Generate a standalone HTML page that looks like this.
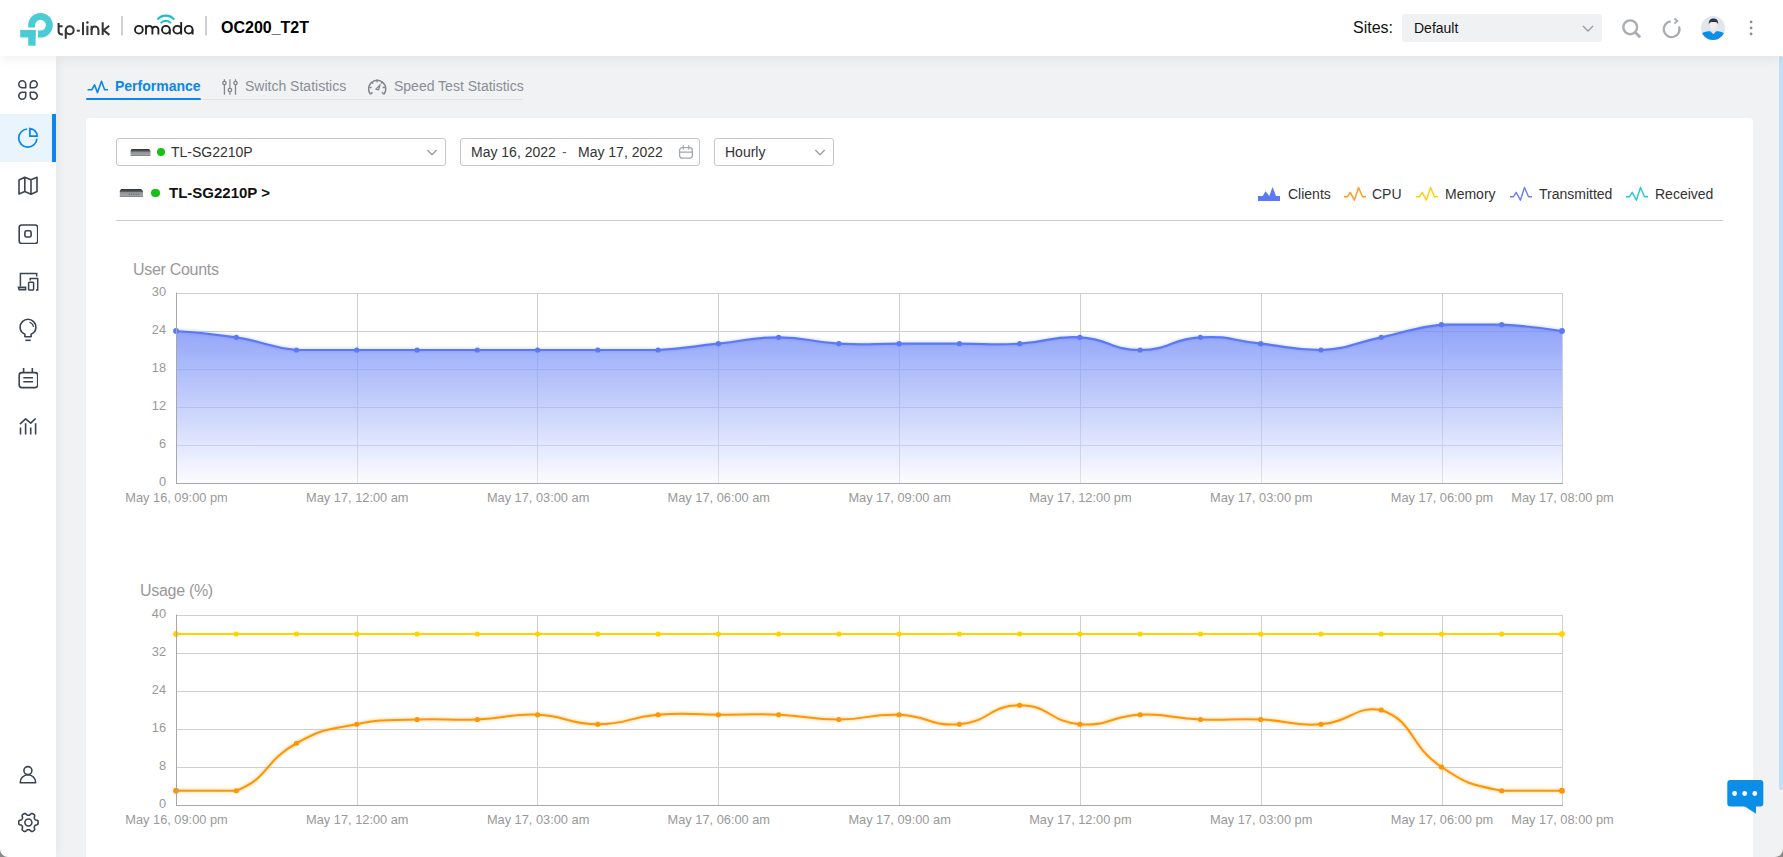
<!DOCTYPE html>
<html><head><meta charset="utf-8"><style>
*{box-sizing:border-box}
html,body{margin:0;padding:0}
body{width:1783px;height:857px;overflow:hidden;background:#f1f2f4;font-family:"Liberation Sans", sans-serif;position:relative;color:#333}
.abs{position:absolute}
.si{position:absolute}
#hdr{position:absolute;left:0;top:0;width:1783px;height:56px;background:#fff;box-shadow:0 2px 12px rgba(0,0,0,0.07);z-index:5}
#side{position:absolute;left:0;top:56px;width:56px;height:801px;background:#fff;z-index:3;box-shadow:2px 0 10px rgba(0,0,0,0.05)}
#card{position:absolute;left:86px;top:118px;width:1667px;height:760px;background:#fff;border-radius:4px}
.ax{font-family:"Liberation Sans", sans-serif;font-size:12.8px;fill:#999}
.ttl{font-family:"Liberation Sans", sans-serif;font-size:16px;fill:#999;letter-spacing:-0.3px}
.txt{position:absolute;white-space:nowrap;line-height:1}
.box{position:absolute;border:1px solid #c3c7cc;border-radius:3px;background:#fff}
</style></head><body>
<div id="hdr">
<svg class="abs" style="left:0;top:0" width="320" height="56" viewBox="0 0 320 56">
<rect x="20.2" y="30" width="15.4" height="7.4" fill="#4acbd6"/>
<rect x="28.2" y="30" width="7.4" height="15.7" fill="#4acbd6"/>
<path d="M31.65 27.4 V25.2 A8.85 8.85 0 1 1 40.5 34.05 H38" fill="none" stroke="#4acbd6" stroke-width="6.9"/>
<rect x="121" y="16" width="2" height="19.5" fill="#cdd1d5"/>
<rect x="205" y="16" width="2" height="19.5" fill="#cdd1d5"/>
<path d="M157.4 19.6 A10.85 10.85 0 0 1 174.2 19.6" fill="none" stroke="#1cbdcc" stroke-width="2.1"/>
<path d="M160.7 23.1 A6.8 6.8 0 0 1 170.9 23.1" fill="none" stroke="#1cbdcc" stroke-width="2.1"/>
</svg>
<svg class="abs" style="left:0;top:0" width="200" height="56" viewBox="0 0 200 56" fill="none" stroke="#363636" stroke-width="2.05">
<path d="M58.6 22.9 V31.6 C58.6 33.6 59.8 34.6 62.9 34.6 M58.6 26.3 H62.6"/>
<circle cx="69.7" cy="30.25" r="3.95"/><path d="M65.75 30.2 V38.8"/>
<path d="M76.8 30.7 H79.8" stroke-width="2"/>
<path d="M83 22.2 V35.1"/>
<path d="M87.4 25.8 V35.1"/><circle cx="87.4" cy="22.4" r="1.25" fill="#333" stroke="none"/>
<path d="M91.6 35.1 V29.9 A3.4 3.4 0 0 1 98.4 29.9 V35.1"/><path d="M91.6 25.8 V30"/>
<path d="M102.7 22.2 V35.1 M109.2 25.7 L103.6 30.2 L109.4 34.9"/>
</svg>
<svg class="abs" style="left:0;top:0" width="200" height="56" viewBox="0 0 200 56" fill="none" stroke="#1f1f1f" stroke-width="1.85">
<circle cx="138.9" cy="29.7" r="3.9"/>
<path d="M146 34.5 V25.3 M146 29 A3.2 3.2 0 0 1 152.4 29 V34.5 M152.4 29 A3.1 3.1 0 0 1 158.4 29 V34.5"/>
<circle cx="165.9" cy="29.7" r="3.9"/><path d="M169.8 29.7 V34.5"/>
<circle cx="177.3" cy="29.7" r="3.9"/><path d="M181.2 22 V34.5"/>
<circle cx="188.7" cy="29.7" r="3.9"/><path d="M192.6 29.7 V34.5"/>
</svg>
<div class="txt" style="left:221px;top:20px;font-size:16px;font-weight:bold;color:#000">OC200_T2T</div>
<div class="txt" style="left:1353px;top:20px;font-size:16px;color:#111">Sites:</div>
<div class="abs" style="left:1402px;top:14px;width:200px;height:28px;background:#f0f1f3;border-radius:3px"></div>
<div class="txt" style="left:1414px;top:21px;font-size:14px;color:#111">Default</div>
<svg class="abs" style="left:1580px;top:22px" width="16" height="12" viewBox="0 0 16 12"><path d="M3 4 L8 9 L13 4" fill="none" stroke="#999ea4" stroke-width="1.4"/></svg>
<svg class="abs" style="left:1618px;top:15px" width="26" height="26" viewBox="0 0 26 26" fill="none" stroke="#a9adb2">
<circle cx="12.2" cy="12.3" r="6.9" stroke-width="2.4"/><path d="M17.4 17.4 L22.2 22.2" stroke-width="2.8"/></svg>
<svg class="abs" style="left:1658px;top:15px" width="26" height="26" viewBox="0 0 26 26" fill="none" stroke="#a9adb2" stroke-width="2.3">
<path d="M12.8 6.3 A7.9 7.9 0 1 0 21 11.3"/><path d="M16.3 3.4 L19.4 6 L16.5 8.6" stroke-width="1.9"/></svg>
<svg class="abs" style="left:1701px;top:16px" width="24" height="24" viewBox="0 0 24 24">
<defs><clipPath id="av"><circle cx="12" cy="12" r="12"/></clipPath></defs>
<circle cx="12" cy="12" r="12" fill="#e1e6eb"/>
<g clip-path="url(#av)"><path d="M0 17.8 C3 15.6 6.5 15.3 9.3 15.3 L12.3 18 L15.3 15.3 C18 15.3 21 15.6 24 17.8 V24 H0 Z" fill="#0a8ee8"/>
<path d="M10.6 11.5 H14.1 V16 L12.3 17.8 L10.6 16 Z" fill="#ebe4e4"/>
<path d="M9.1 7 C9.1 11.5 9.8 13.6 12.35 13.6 C14.9 13.6 15.6 11.5 15.6 7 Z" fill="#f4efef"/>
<path d="M7.9 8.4 C7.4 4.5 9.2 2.4 12.5 2.4 C15.8 2.4 17.6 4.5 17.1 8.4 C16.5 6.4 15.6 5.9 12.5 6 C9.4 5.9 8.5 6.4 7.9 8.4 Z" fill="#2b3844"/></g></svg>
<svg class="abs" style="left:1746px;top:18px" width="10" height="20" viewBox="0 0 10 20" fill="#8c9096"><circle cx="5.1" cy="3.9" r="1.4"/><circle cx="5.1" cy="9.9" r="1.4"/><circle cx="5.1" cy="16" r="1.4"/></svg>
</div>
<div id="side">
<div class="abs" style="left:0;top:58px;width:52px;height:48px;background:#eaf4fd"></div>
<div class="abs" style="left:52px;top:58px;width:4px;height:48px;background:#0a87eb"></div>
</div>
<div style="position:absolute;left:0;top:0;z-index:6">
<svg class="si" style="left:18px;top:80px" width="20" height="20" viewBox="0 0 20 20" fill="none" stroke="#3b4351" stroke-width="1.6" stroke-linejoin="round">
<path d="M7.7 7.7 H4.25 A3.45 3.45 0 1 1 7.7 4.25 Z"/><path d="M12.3 7.7 V4.25 A3.45 3.45 0 1 1 15.75 7.7 Z"/>
<path d="M7.7 12.3 V15.75 A3.45 3.45 0 1 1 4.25 12.3 Z"/><path d="M12.3 12.3 H15.75 A3.45 3.45 0 1 1 12.3 15.75 Z"/></svg>
<svg class="si" style="left:16px;top:126px" width="24" height="24" viewBox="0 0 24 24" fill="none" stroke="#0a87eb" stroke-width="1.7">
<path d="M11.2 3 A9.1 9.1 0 1 0 20.9 12.6"/><path d="M13.9 2.5 V10.1 H21.2 A8 8 0 0 0 13.9 2.5 Z" stroke-linejoin="miter"/></svg>
<svg class="si" style="left:18px;top:176px" width="20" height="20" viewBox="0 0 20 20" fill="none" stroke="#3b4351" stroke-width="1.6" stroke-linejoin="round">
<path d="M1 4 L6.8 1.2 L13 3.8 L19 1.3 V15.6 L13 18.2 L6.8 15.5 L1 18 Z M6.8 1.2 V15.5 M13 3.8 V18.2"/></svg>
<svg class="si" style="left:18px;top:224px" width="20" height="20" viewBox="0 0 20 20" fill="none" stroke="#3b4351" stroke-width="1.6">
<rect x="1.2" y="1" width="18.5" height="18.5" rx="2.6"/><rect x="6.9" y="6.8" width="6.2" height="6.2" rx="1.6"/></svg>
<svg class="si" style="left:16px;top:270px" width="24" height="24" viewBox="0 0 24 24" fill="none" stroke="#3b4351" stroke-width="1.5">
<path d="M4.4 16.5 V3.6 H20.7 V6.5"/><path d="M2.4 17.3 H9.6 V19.8 H3.2 Z" fill="#b4b8bf"/><path d="M14.2 10.4 V8.5 H21.7 V20 H20"/><rect x="12.6" y="12.2" width="5" height="7.9" rx="0.8"/></svg>
<svg class="si" style="left:16px;top:316px" width="24" height="26" viewBox="0 0 24 26" fill="none" stroke="#3b4351" stroke-width="1.6">
<path d="M8.9 18.2 V20.8 H15.1 V18.2 C18.2 16.8 19.9 14.2 19.9 11.2 A7.9 7.9 0 1 0 4.1 11.2 C4.1 14.2 5.8 16.8 8.9 18.2 Z" stroke-linejoin="round"/><path d="M9.4 24.3 H14.7"/><path d="M13.4 6.3 A6.2 6.2 0 0 1 17.6 10.8" stroke-width="1.2"/></svg>
<svg class="si" style="left:18px;top:366px" width="20" height="24" viewBox="0 0 20 24" fill="none" stroke="#3b4351" stroke-width="1.6">
<rect x="1.2" y="6.6" width="18.5" height="15" rx="2.6"/><path d="M5.6 2 V6.6 M14.3 2 V6.6 M5.3 11.7 H15 M5.3 15.8 H15"/></svg>
<svg class="si" style="left:18px;top:416px" width="20" height="20" viewBox="0 0 20 20" fill="none" stroke="#3b4351" stroke-width="1.6">
<path d="M1.9 8.1 L7.6 2.9 L12.7 7.1 L17.6 2.5" stroke-linejoin="round"/><path d="M2.5 11.4 V18.5 M7.6 7.3 V18.5 M12.7 11.4 V18.5 M17.6 7.3 V18.5"/></svg>
<svg class="si" style="left:18px;top:765px" width="20" height="20" viewBox="0 0 20 20" fill="none" stroke="#3b4351" stroke-width="1.6">
<circle cx="9.9" cy="5.6" r="4"/><path d="M2.2 17.7 A7.75 8 0 0 1 17.7 17.7 Z" stroke-linejoin="round"/></svg>
<svg class="si" style="left:17.5px;top:812px" width="21" height="21" viewBox="0 0 21 21" fill="none" stroke="#3b4351" stroke-width="1.6" stroke-linejoin="round">
<path d="M20.16 10.50 L20.14 11.01 L20.08 11.52 L19.94 12.01 L19.61 12.46 L18.88 12.77 L17.96 12.96 L17.39 13.18 L17.09 13.48 L16.88 13.80 L16.69 14.13 L16.50 14.46 L16.33 14.81 L16.22 15.21 L16.31 15.82 L16.61 16.71 L16.70 17.50 L16.48 18.01 L16.12 18.38 L15.71 18.68 L15.28 18.95 L14.83 19.19 L14.36 19.39 L13.86 19.52 L13.31 19.46 L12.67 18.98 L12.05 18.28 L11.57 17.89 L11.17 17.79 L10.78 17.77 L10.40 17.77 L10.02 17.77 L9.63 17.79 L9.23 17.89 L8.75 18.28 L8.13 18.98 L7.49 19.46 L6.94 19.52 L6.44 19.39 L5.97 19.19 L5.52 18.95 L5.09 18.68 L4.68 18.38 L4.32 18.01 L4.10 17.50 L4.19 16.71 L4.49 15.82 L4.58 15.21 L4.47 14.81 L4.30 14.46 L4.11 14.13 L3.92 13.80 L3.71 13.48 L3.41 13.18 L2.84 12.96 L1.92 12.77 L1.19 12.46 L0.86 12.01 L0.72 11.52 L0.66 11.01 L0.64 10.50 L0.66 9.99 L0.72 9.48 L0.86 8.99 L1.19 8.54 L1.92 8.23 L2.84 8.04 L3.41 7.82 L3.71 7.52 L3.92 7.20 L4.11 6.87 L4.30 6.54 L4.47 6.19 L4.58 5.79 L4.49 5.18 L4.19 4.29 L4.10 3.50 L4.32 2.99 L4.68 2.62 L5.09 2.32 L5.52 2.05 L5.97 1.81 L6.44 1.61 L6.94 1.48 L7.49 1.54 L8.13 2.02 L8.75 2.72 L9.23 3.11 L9.63 3.21 L10.02 3.23 L10.40 3.23 L10.78 3.23 L11.17 3.21 L11.57 3.11 L12.05 2.72 L12.67 2.02 L13.31 1.54 L13.86 1.48 L14.36 1.61 L14.83 1.81 L15.28 2.05 L15.71 2.32 L16.12 2.62 L16.48 2.99 L16.70 3.50 L16.61 4.29 L16.31 5.18 L16.22 5.79 L16.33 6.19 L16.50 6.54 L16.69 6.87 L16.88 7.20 L17.09 7.52 L17.39 7.82 L17.96 8.04 L18.88 8.23 L19.61 8.54 L19.94 8.99 L20.08 9.48 L20.14 9.99 L20.16 10.50Z"/><circle cx="10.4" cy="10.5" r="3.5"/></svg></div>

<!-- tabs -->
<svg class="abs" style="left:84px;top:74px" width="30" height="24" viewBox="0 0 30 24" fill="none" stroke="#0a87eb" stroke-width="1.6" stroke-linejoin="round">
<path d="M3.6 15.7 H8 L10.5 10.8 L13.5 18.6 L17.5 7.2 L20.6 15.7 H24"/></svg>
<div class="txt" style="left:115px;top:79px;font-size:14px;font-weight:bold;color:#0a87eb">Performance</div>
<div class="abs" style="left:86px;top:98px;width:115px;height:2px;background:#0a87eb;border-radius:1px"></div>
<div class="abs" style="left:201px;top:98.5px;width:322px;height:1px;background:#e1e3e7"></div>
<svg class="abs" style="left:216px;top:74px" width="28" height="24" viewBox="216 74 28 24" fill="none" stroke="#80868e" stroke-width="1.3">
<path d="M224.4 79.2 V81.3 M224.4 84.7 V94.7 M235.5 79.2 V81.3 M235.5 84.7 V94.7 M229.9 92.3 V94.7"/><path d="M229.9 79.2 V88" stroke="#a5aab0" stroke-width="1.7"/>
<circle cx="224.4" cy="83" r="1.7"/><circle cx="235.5" cy="83" r="1.7"/><circle cx="229.9" cy="90.1" r="1.8"/></svg>
<div class="txt" style="left:245px;top:79px;font-size:14px;color:#8a8e94">Switch Statistics</div>
<svg class="abs" style="left:362px;top:74px" width="30" height="24" viewBox="362 74 30 24" fill="none" stroke="#80868e" stroke-width="1.5">
<path d="M370.5 94.3 A8.6 8.6 0 1 1 383.9 94.3"/>
<path d="M377.1 79.5 V82.3 M369.2 87.5 H371.6 M385 87.5 H382.6 M371.5 81.9 L373.3 83.5 M382.7 81.9 L380.9 83.5 M370.6 94.2 L372.5 92.3 M383.8 94.2 L381.9 92.3" stroke-width="1.4"/>
<path d="M375.8 89.2 L380.1 84.8 L378.5 90 Z" stroke-width="1.2" stroke-linejoin="round"/></svg>
<div class="txt" style="left:394px;top:79px;font-size:14px;color:#8a8e94">Speed Test Statistics</div>

<div id="card"></div>

<!-- filters -->
<div class="box" style="left:116px;top:138px;width:330px;height:28px"></div>
<svg class="abs" style="left:130px;top:148px" width="22" height="9" viewBox="0 0 22 9"><defs><linearGradient id="sw" x1="0" y1="0" x2="0" y2="1"><stop offset="0" stop-color="#2f3134"/><stop offset="0.3" stop-color="#55585b"/><stop offset="0.42" stop-color="#8e9194"/><stop offset="0.85" stop-color="#a3a5a8"/><stop offset="1" stop-color="#6e7073"/></linearGradient></defs><path d="M1.5 1 H19 L20.5 3 V8 H0.5 V3 Z" fill="url(#sw)"/></svg>
<div class="abs" style="left:157px;top:148px;width:8px;height:8px;border-radius:50%;background:#16c016"></div>
<div class="txt" style="left:171px;top:145px;font-size:14px;color:#333">TL-SG2210P</div>
<svg class="abs" style="left:424px;top:146px" width="16" height="12" viewBox="0 0 16 12"><path d="M3.3 4 L8 8.8 L12.7 4" fill="none" stroke="#9aa0a6" stroke-width="1.3"/></svg>

<div class="box" style="left:460px;top:138px;width:240px;height:28px"></div>
<div class="txt" style="left:471px;top:145px;font-size:14px;color:#333">May 16, 2022</div>
<div class="txt" style="left:562px;top:145px;font-size:14px;color:#666">-</div>
<div class="txt" style="left:578px;top:145px;font-size:14px;color:#333">May 17, 2022</div>
<svg class="abs" style="left:678px;top:144px" width="16" height="16" viewBox="0 0 16 16" fill="none" stroke="#a3a8ad" stroke-width="1.3">
<rect x="1.6" y="3.6" width="12.7" height="10.6" rx="2.6"/><path d="M1.6 8.2 H14.3 M5.3 1.3 V5.5 M10.7 1.3 V5.5"/></svg>

<div class="box" style="left:714px;top:138px;width:120px;height:28px"></div>
<div class="txt" style="left:725px;top:145px;font-size:14px;color:#333">Hourly</div>
<svg class="abs" style="left:812px;top:146px" width="16" height="12" viewBox="0 0 16 12"><path d="M3.3 4 L8 8.8 L12.7 4" fill="none" stroke="#9aa0a6" stroke-width="1.3"/></svg>

<!-- device row -->
<svg class="abs" style="left:119px;top:188px" width="26" height="10" viewBox="0 0 26 10"><path d="M2 1 H22 L24 3 V9 H0.8 V3 Z" fill="url(#sw)"/><path d="M10 6.3 H21" stroke="#55585b" stroke-width="1" stroke-dasharray="1 1.2"/></svg>
<div class="abs" style="left:151px;top:188.5px;width:8.5px;height:8.5px;border-radius:50%;background:#16c016"></div>
<div class="txt" style="left:169px;top:185px;font-size:15px;font-weight:bold;color:#111">TL-SG2210P &gt;</div>

<!-- legend -->
<svg class="abs" style="left:1256px;top:184px" width="470" height="20" viewBox="1256 184 470 20">
<path d="M1258 201 V196 H1262.8 L1265.5 191.2 L1269.3 196 L1272.6 187 L1276 196 H1280 V201 Z" fill="#5b78f5"/>
<path d="M1344 196.7 H1347.5 L1350.2 192.3 L1354.4 200.2 L1358.5 187.5 L1362.5 196.7 H1366" fill="none" stroke="#ff9a1f" stroke-width="1.4" stroke-linejoin="round"/>
<path d="M1416 196.7 H1419.5 L1422.2 192.3 L1426.4 200.2 L1430.5 187.5 L1434.5 196.7 H1438" fill="none" stroke="#fdd000" stroke-width="1.4" stroke-linejoin="round"/>
<path d="M1510 196.7 H1513.5 L1516.2 192.3 L1520.4 200.2 L1524.5 187.5 L1528.5 196.7 H1532" fill="none" stroke="#6a80f0" stroke-width="1.4" stroke-linejoin="round"/>
<path d="M1626 196.7 H1629.5 L1632.2 192.3 L1636.4 200.2 L1640.5 187.5 L1644.5 196.7 H1648" fill="none" stroke="#1fcbd9" stroke-width="1.4" stroke-linejoin="round"/>
</svg>
<div class="txt" style="left:1288px;top:187px;font-size:14px;color:#333">Clients</div>
<div class="txt" style="left:1372px;top:187px;font-size:14px;color:#333">CPU</div>
<div class="txt" style="left:1445px;top:187px;font-size:14px;color:#333">Memory</div>
<div class="txt" style="left:1539px;top:187px;font-size:14px;color:#333">Transmitted</div>
<div class="txt" style="left:1655px;top:187px;font-size:14px;color:#333">Received</div>
<div class="abs" style="left:116px;top:220px;width:1607px;height:1px;background:#c9cdd1"></div>

<svg class="abs" style="left:0;top:0" width="1783" height="857" viewBox="0 0 1783 857">
<defs><filter id="blur" x="-5%" y="-50%" width="110%" height="200%"><feGaussianBlur stdDeviation="1.6"/></filter></defs>
<defs><mask id="mc1"><rect x="0" y="0" width="1783" height="857" fill="#fff"/><path d="M176.00 331.00 C176.00 331.00 206.37 332.62 236.26 337.33 C266.63 342.12 266.07 346.80 296.52 350.00 C326.33 350.00 326.65 350.00 356.78 350.00 C386.91 350.00 386.91 350.00 417.04 350.00 C447.17 350.00 447.17 350.00 477.30 350.00 C507.43 350.00 507.43 350.00 537.57 350.00 C567.70 350.00 567.70 350.00 597.83 350.00 C627.96 350.00 628.04 350.00 658.09 350.00 C688.30 348.41 688.22 346.83 718.35 343.67 C748.48 340.50 748.48 337.33 778.61 337.33 C808.74 337.33 808.66 342.08 838.87 343.67 C868.92 345.25 869.00 343.67 899.13 343.67 C929.26 343.67 929.26 343.67 959.39 343.67 C989.52 343.67 989.60 345.25 1019.65 343.67 C1049.87 342.08 1050.03 335.76 1079.91 337.33 C1110.29 338.93 1110.04 350.00 1140.17 350.00 C1170.30 350.00 1170.06 338.93 1200.43 337.33 C1230.32 335.76 1230.57 340.50 1260.70 343.67 C1290.83 346.83 1291.07 350.00 1320.96 350.00 C1351.33 348.40 1351.09 343.67 1381.22 337.33 C1411.35 331.00 1411.02 327.87 1441.48 324.67 C1471.28 324.67 1471.69 324.67 1501.74 324.67 C1531.95 326.25 1562.00 331.00 1562.00 331.00 L1562.00 483.5 L176.00 483.5 Z" fill="#000"/></mask></defs>
<g stroke="#e2e3ea" stroke-width="1"><line x1="176.5" y1="483.5" x2="1563.0" y2="483.5"/><line x1="176.5" y1="445.5" x2="1563.0" y2="445.5"/><line x1="176.5" y1="407.5" x2="1563.0" y2="407.5"/><line x1="176.5" y1="369.5" x2="1563.0" y2="369.5"/><line x1="176.5" y1="331.5" x2="1563.0" y2="331.5"/><line x1="176.5" y1="293.5" x2="1563.0" y2="293.5"/><line x1="357.5" y1="293.5" x2="357.5" y2="483.5"/><line x1="537.5" y1="293.5" x2="537.5" y2="483.5"/><line x1="718.5" y1="293.5" x2="718.5" y2="483.5"/><line x1="899.5" y1="293.5" x2="899.5" y2="483.5"/><line x1="1080.5" y1="293.5" x2="1080.5" y2="483.5"/><line x1="1261.5" y1="293.5" x2="1261.5" y2="483.5"/><line x1="1442.5" y1="293.5" x2="1442.5" y2="483.5"/><line x1="1562.5" y1="293.5" x2="1562.5" y2="483.5"/></g>
<g stroke="#cfcfcf" stroke-width="1" mask="url(#mc1)"><line x1="176.5" y1="483.5" x2="1563.0" y2="483.5"/><line x1="176.5" y1="445.5" x2="1563.0" y2="445.5"/><line x1="176.5" y1="407.5" x2="1563.0" y2="407.5"/><line x1="176.5" y1="369.5" x2="1563.0" y2="369.5"/><line x1="176.5" y1="331.5" x2="1563.0" y2="331.5"/><line x1="176.5" y1="293.5" x2="1563.0" y2="293.5"/><line x1="357.5" y1="293.5" x2="357.5" y2="483.5"/><line x1="537.5" y1="293.5" x2="537.5" y2="483.5"/><line x1="718.5" y1="293.5" x2="718.5" y2="483.5"/><line x1="899.5" y1="293.5" x2="899.5" y2="483.5"/><line x1="1080.5" y1="293.5" x2="1080.5" y2="483.5"/><line x1="1261.5" y1="293.5" x2="1261.5" y2="483.5"/><line x1="1442.5" y1="293.5" x2="1442.5" y2="483.5"/><line x1="1562.5" y1="293.5" x2="1562.5" y2="483.5"/></g>
<defs><linearGradient id="cg" x1="0" y1="0" x2="0" y2="1"><stop offset="0" stop-color="#5b78f5" stop-opacity="0.68"/><stop offset="1" stop-color="#5b78f5" stop-opacity="0.02"/></linearGradient></defs><path d="M176.00 331.00 C176.00 331.00 206.37 332.62 236.26 337.33 C266.63 342.12 266.07 346.80 296.52 350.00 C326.33 350.00 326.65 350.00 356.78 350.00 C386.91 350.00 386.91 350.00 417.04 350.00 C447.17 350.00 447.17 350.00 477.30 350.00 C507.43 350.00 507.43 350.00 537.57 350.00 C567.70 350.00 567.70 350.00 597.83 350.00 C627.96 350.00 628.04 350.00 658.09 350.00 C688.30 348.41 688.22 346.83 718.35 343.67 C748.48 340.50 748.48 337.33 778.61 337.33 C808.74 337.33 808.66 342.08 838.87 343.67 C868.92 345.25 869.00 343.67 899.13 343.67 C929.26 343.67 929.26 343.67 959.39 343.67 C989.52 343.67 989.60 345.25 1019.65 343.67 C1049.87 342.08 1050.03 335.76 1079.91 337.33 C1110.29 338.93 1110.04 350.00 1140.17 350.00 C1170.30 350.00 1170.06 338.93 1200.43 337.33 C1230.32 335.76 1230.57 340.50 1260.70 343.67 C1290.83 346.83 1291.07 350.00 1320.96 350.00 C1351.33 348.40 1351.09 343.67 1381.22 337.33 C1411.35 331.00 1411.02 327.87 1441.48 324.67 C1471.28 324.67 1471.69 324.67 1501.74 324.67 C1531.95 326.25 1562.00 331.00 1562.00 331.00 L1562.00 483.5 L176.00 483.5 Z" fill="url(#cg)"/><path d="M176.00 331.00 C176.00 331.00 206.37 332.62 236.26 337.33 C266.63 342.12 266.07 346.80 296.52 350.00 C326.33 350.00 326.65 350.00 356.78 350.00 C386.91 350.00 386.91 350.00 417.04 350.00 C447.17 350.00 447.17 350.00 477.30 350.00 C507.43 350.00 507.43 350.00 537.57 350.00 C567.70 350.00 567.70 350.00 597.83 350.00 C627.96 350.00 628.04 350.00 658.09 350.00 C688.30 348.41 688.22 346.83 718.35 343.67 C748.48 340.50 748.48 337.33 778.61 337.33 C808.74 337.33 808.66 342.08 838.87 343.67 C868.92 345.25 869.00 343.67 899.13 343.67 C929.26 343.67 929.26 343.67 959.39 343.67 C989.52 343.67 989.60 345.25 1019.65 343.67 C1049.87 342.08 1050.03 335.76 1079.91 337.33 C1110.29 338.93 1110.04 350.00 1140.17 350.00 C1170.30 350.00 1170.06 338.93 1200.43 337.33 C1230.32 335.76 1230.57 340.50 1260.70 343.67 C1290.83 346.83 1291.07 350.00 1320.96 350.00 C1351.33 348.40 1351.09 343.67 1381.22 337.33 C1411.35 331.00 1411.02 327.87 1441.48 324.67 C1471.28 324.67 1471.69 324.67 1501.74 324.67 C1531.95 326.25 1562.00 331.00 1562.00 331.00" fill="none" stroke="#5b78f5" stroke-width="3.5" opacity="0.25" filter="url(#blur)"/><path d="M176.00 331.00 C176.00 331.00 206.37 332.62 236.26 337.33 C266.63 342.12 266.07 346.80 296.52 350.00 C326.33 350.00 326.65 350.00 356.78 350.00 C386.91 350.00 386.91 350.00 417.04 350.00 C447.17 350.00 447.17 350.00 477.30 350.00 C507.43 350.00 507.43 350.00 537.57 350.00 C567.70 350.00 567.70 350.00 597.83 350.00 C627.96 350.00 628.04 350.00 658.09 350.00 C688.30 348.41 688.22 346.83 718.35 343.67 C748.48 340.50 748.48 337.33 778.61 337.33 C808.74 337.33 808.66 342.08 838.87 343.67 C868.92 345.25 869.00 343.67 899.13 343.67 C929.26 343.67 929.26 343.67 959.39 343.67 C989.52 343.67 989.60 345.25 1019.65 343.67 C1049.87 342.08 1050.03 335.76 1079.91 337.33 C1110.29 338.93 1110.04 350.00 1140.17 350.00 C1170.30 350.00 1170.06 338.93 1200.43 337.33 C1230.32 335.76 1230.57 340.50 1260.70 343.67 C1290.83 346.83 1291.07 350.00 1320.96 350.00 C1351.33 348.40 1351.09 343.67 1381.22 337.33 C1411.35 331.00 1411.02 327.87 1441.48 324.67 C1471.28 324.67 1471.69 324.67 1501.74 324.67 C1531.95 326.25 1562.00 331.00 1562.00 331.00" fill="none" stroke="#5b78f5" stroke-width="2.2"/><circle cx="176.00" cy="331.00" r="2.9" fill="#5b78f5"/><circle cx="236.26" cy="337.33" r="2.6" fill="#5b78f5"/><circle cx="296.52" cy="350.00" r="2.6" fill="#5b78f5"/><circle cx="356.78" cy="350.00" r="2.6" fill="#5b78f5"/><circle cx="417.04" cy="350.00" r="2.6" fill="#5b78f5"/><circle cx="477.30" cy="350.00" r="2.6" fill="#5b78f5"/><circle cx="537.57" cy="350.00" r="2.6" fill="#5b78f5"/><circle cx="597.83" cy="350.00" r="2.6" fill="#5b78f5"/><circle cx="658.09" cy="350.00" r="2.6" fill="#5b78f5"/><circle cx="718.35" cy="343.67" r="2.6" fill="#5b78f5"/><circle cx="778.61" cy="337.33" r="2.6" fill="#5b78f5"/><circle cx="838.87" cy="343.67" r="2.6" fill="#5b78f5"/><circle cx="899.13" cy="343.67" r="2.6" fill="#5b78f5"/><circle cx="959.39" cy="343.67" r="2.6" fill="#5b78f5"/><circle cx="1019.65" cy="343.67" r="2.6" fill="#5b78f5"/><circle cx="1079.91" cy="337.33" r="2.6" fill="#5b78f5"/><circle cx="1140.17" cy="350.00" r="2.6" fill="#5b78f5"/><circle cx="1200.43" cy="337.33" r="2.6" fill="#5b78f5"/><circle cx="1260.70" cy="343.67" r="2.6" fill="#5b78f5"/><circle cx="1320.96" cy="350.00" r="2.6" fill="#5b78f5"/><circle cx="1381.22" cy="337.33" r="2.6" fill="#5b78f5"/><circle cx="1441.48" cy="324.67" r="2.6" fill="#5b78f5"/><circle cx="1501.74" cy="324.67" r="2.6" fill="#5b78f5"/><circle cx="1562.00" cy="331.00" r="2.9" fill="#5b78f5"/>
<line x1="176.5" y1="292.5" x2="176.5" y2="483.5" stroke="#a8a8a8" stroke-width="1"/>
<line x1="176.0" y1="483.5" x2="1563.0" y2="483.5" stroke="#a8a8a8" stroke-width="1"/>
<text x="166" y="485.8" text-anchor="end" class="ax">0</text>
<text x="166" y="447.8" text-anchor="end" class="ax">6</text>
<text x="166" y="409.8" text-anchor="end" class="ax">12</text>
<text x="166" y="371.8" text-anchor="end" class="ax">18</text>
<text x="166" y="333.8" text-anchor="end" class="ax">24</text>
<text x="166" y="295.8" text-anchor="end" class="ax">30</text>
<text x="176.5" y="502.0" text-anchor="middle" class="ax">May 16, 09:00 pm</text>
<text x="357.3" y="502.0" text-anchor="middle" class="ax">May 17, 12:00 am</text>
<text x="538.1" y="502.0" text-anchor="middle" class="ax">May 17, 03:00 am</text>
<text x="718.8" y="502.0" text-anchor="middle" class="ax">May 17, 06:00 am</text>
<text x="899.6" y="502.0" text-anchor="middle" class="ax">May 17, 09:00 am</text>
<text x="1080.4" y="502.0" text-anchor="middle" class="ax">May 17, 12:00 pm</text>
<text x="1261.2" y="502.0" text-anchor="middle" class="ax">May 17, 03:00 pm</text>
<text x="1442.0" y="502.0" text-anchor="middle" class="ax">May 17, 06:00 pm</text>
<text x="1562.5" y="502.0" text-anchor="middle" class="ax">May 17, 08:00 pm</text>
<text x="133" y="274.5" class="ttl">User Counts</text>
<g stroke="#cfcfcf" stroke-width="1"><line x1="176.5" y1="805.5" x2="1563.0" y2="805.5"/><line x1="176.5" y1="767.5" x2="1563.0" y2="767.5"/><line x1="176.5" y1="729.5" x2="1563.0" y2="729.5"/><line x1="176.5" y1="691.5" x2="1563.0" y2="691.5"/><line x1="176.5" y1="653.5" x2="1563.0" y2="653.5"/><line x1="176.5" y1="615.5" x2="1563.0" y2="615.5"/><line x1="357.5" y1="615.5" x2="357.5" y2="805.5"/><line x1="537.5" y1="615.5" x2="537.5" y2="805.5"/><line x1="718.5" y1="615.5" x2="718.5" y2="805.5"/><line x1="899.5" y1="615.5" x2="899.5" y2="805.5"/><line x1="1080.5" y1="615.5" x2="1080.5" y2="805.5"/><line x1="1261.5" y1="615.5" x2="1261.5" y2="805.5"/><line x1="1442.5" y1="615.5" x2="1442.5" y2="805.5"/><line x1="1562.5" y1="615.5" x2="1562.5" y2="805.5"/></g>
<path d="M176.00 634.00 C176.00 634.00 206.13 634.00 236.26 634.00 C266.39 634.00 266.39 634.00 296.52 634.00 C326.65 634.00 326.65 634.00 356.78 634.00 C386.91 634.00 386.91 634.00 417.04 634.00 C447.17 634.00 447.17 634.00 477.30 634.00 C507.43 634.00 507.43 634.00 537.57 634.00 C567.70 634.00 567.70 634.00 597.83 634.00 C627.96 634.00 627.96 634.00 658.09 634.00 C688.22 634.00 688.22 634.00 718.35 634.00 C748.48 634.00 748.48 634.00 778.61 634.00 C808.74 634.00 808.74 634.00 838.87 634.00 C869.00 634.00 869.00 634.00 899.13 634.00 C929.26 634.00 929.26 634.00 959.39 634.00 C989.52 634.00 989.52 634.00 1019.65 634.00 C1049.78 634.00 1049.78 634.00 1079.91 634.00 C1110.04 634.00 1110.04 634.00 1140.17 634.00 C1170.30 634.00 1170.30 634.00 1200.43 634.00 C1230.57 634.00 1230.57 634.00 1260.70 634.00 C1290.83 634.00 1290.83 634.00 1320.96 634.00 C1351.09 634.00 1351.09 634.00 1381.22 634.00 C1411.35 634.00 1411.35 634.00 1441.48 634.00 C1471.61 634.00 1471.61 634.00 1501.74 634.00 C1531.87 634.00 1562.00 634.00 1562.00 634.00" fill="none" stroke="#ffd200" stroke-width="3.5" opacity="0.3" filter="url(#blur)"/><path d="M176.00 634.00 C176.00 634.00 206.13 634.00 236.26 634.00 C266.39 634.00 266.39 634.00 296.52 634.00 C326.65 634.00 326.65 634.00 356.78 634.00 C386.91 634.00 386.91 634.00 417.04 634.00 C447.17 634.00 447.17 634.00 477.30 634.00 C507.43 634.00 507.43 634.00 537.57 634.00 C567.70 634.00 567.70 634.00 597.83 634.00 C627.96 634.00 627.96 634.00 658.09 634.00 C688.22 634.00 688.22 634.00 718.35 634.00 C748.48 634.00 748.48 634.00 778.61 634.00 C808.74 634.00 808.74 634.00 838.87 634.00 C869.00 634.00 869.00 634.00 899.13 634.00 C929.26 634.00 929.26 634.00 959.39 634.00 C989.52 634.00 989.52 634.00 1019.65 634.00 C1049.78 634.00 1049.78 634.00 1079.91 634.00 C1110.04 634.00 1110.04 634.00 1140.17 634.00 C1170.30 634.00 1170.30 634.00 1200.43 634.00 C1230.57 634.00 1230.57 634.00 1260.70 634.00 C1290.83 634.00 1290.83 634.00 1320.96 634.00 C1351.09 634.00 1351.09 634.00 1381.22 634.00 C1411.35 634.00 1411.35 634.00 1441.48 634.00 C1471.61 634.00 1471.61 634.00 1501.74 634.00 C1531.87 634.00 1562.00 634.00 1562.00 634.00" fill="none" stroke="#ffd200" stroke-width="2"/><circle cx="176.00" cy="634.00" r="2.9" fill="#ffd200"/><circle cx="236.26" cy="634.00" r="2.6" fill="#ffd200"/><circle cx="296.52" cy="634.00" r="2.6" fill="#ffd200"/><circle cx="356.78" cy="634.00" r="2.6" fill="#ffd200"/><circle cx="417.04" cy="634.00" r="2.6" fill="#ffd200"/><circle cx="477.30" cy="634.00" r="2.6" fill="#ffd200"/><circle cx="537.57" cy="634.00" r="2.6" fill="#ffd200"/><circle cx="597.83" cy="634.00" r="2.6" fill="#ffd200"/><circle cx="658.09" cy="634.00" r="2.6" fill="#ffd200"/><circle cx="718.35" cy="634.00" r="2.6" fill="#ffd200"/><circle cx="778.61" cy="634.00" r="2.6" fill="#ffd200"/><circle cx="838.87" cy="634.00" r="2.6" fill="#ffd200"/><circle cx="899.13" cy="634.00" r="2.6" fill="#ffd200"/><circle cx="959.39" cy="634.00" r="2.6" fill="#ffd200"/><circle cx="1019.65" cy="634.00" r="2.6" fill="#ffd200"/><circle cx="1079.91" cy="634.00" r="2.6" fill="#ffd200"/><circle cx="1140.17" cy="634.00" r="2.6" fill="#ffd200"/><circle cx="1200.43" cy="634.00" r="2.6" fill="#ffd200"/><circle cx="1260.70" cy="634.00" r="2.6" fill="#ffd200"/><circle cx="1320.96" cy="634.00" r="2.6" fill="#ffd200"/><circle cx="1381.22" cy="634.00" r="2.6" fill="#ffd200"/><circle cx="1441.48" cy="634.00" r="2.6" fill="#ffd200"/><circle cx="1501.74" cy="634.00" r="2.6" fill="#ffd200"/><circle cx="1562.00" cy="634.00" r="2.9" fill="#ffd200"/><path d="M176.00 790.75 C176.00 790.75 209.75 790.75 236.26 790.75 C270.01 777.45 263.47 761.48 296.52 743.25 C323.74 728.23 325.99 730.32 356.78 724.25 C386.25 718.44 386.87 720.69 417.04 719.50 C447.13 718.31 447.22 720.69 477.30 719.50 C507.48 718.31 507.57 713.57 537.57 714.75 C567.83 715.94 567.70 724.25 597.83 724.25 C627.96 724.25 627.77 717.14 658.09 714.75 C688.03 712.39 688.22 714.75 718.35 714.75 C748.48 714.75 748.52 713.56 778.61 714.75 C808.79 715.94 808.74 719.50 838.87 719.50 C869.00 719.50 869.14 713.57 899.13 714.75 C929.40 715.94 929.79 726.58 959.39 724.25 C990.05 721.83 989.52 705.25 1019.65 705.25 C1049.78 705.25 1049.25 721.83 1079.91 724.25 C1109.51 726.58 1109.91 715.94 1140.17 714.75 C1170.17 713.57 1170.26 718.31 1200.43 719.50 C1230.52 720.69 1230.61 718.31 1260.70 719.50 C1290.87 720.69 1291.19 726.60 1320.96 724.25 C1351.45 721.85 1355.46 705.25 1381.22 710.00 C1415.72 722.24 1407.64 744.33 1441.48 767.00 C1467.90 784.70 1470.52 784.60 1501.74 790.75 C1530.78 790.75 1562.00 790.75 1562.00 790.75" fill="none" stroke="#ff9500" stroke-width="3.5" opacity="0.3" filter="url(#blur)"/><path d="M176.00 790.75 C176.00 790.75 209.75 790.75 236.26 790.75 C270.01 777.45 263.47 761.48 296.52 743.25 C323.74 728.23 325.99 730.32 356.78 724.25 C386.25 718.44 386.87 720.69 417.04 719.50 C447.13 718.31 447.22 720.69 477.30 719.50 C507.48 718.31 507.57 713.57 537.57 714.75 C567.83 715.94 567.70 724.25 597.83 724.25 C627.96 724.25 627.77 717.14 658.09 714.75 C688.03 712.39 688.22 714.75 718.35 714.75 C748.48 714.75 748.52 713.56 778.61 714.75 C808.79 715.94 808.74 719.50 838.87 719.50 C869.00 719.50 869.14 713.57 899.13 714.75 C929.40 715.94 929.79 726.58 959.39 724.25 C990.05 721.83 989.52 705.25 1019.65 705.25 C1049.78 705.25 1049.25 721.83 1079.91 724.25 C1109.51 726.58 1109.91 715.94 1140.17 714.75 C1170.17 713.57 1170.26 718.31 1200.43 719.50 C1230.52 720.69 1230.61 718.31 1260.70 719.50 C1290.87 720.69 1291.19 726.60 1320.96 724.25 C1351.45 721.85 1355.46 705.25 1381.22 710.00 C1415.72 722.24 1407.64 744.33 1441.48 767.00 C1467.90 784.70 1470.52 784.60 1501.74 790.75 C1530.78 790.75 1562.00 790.75 1562.00 790.75" fill="none" stroke="#ff9500" stroke-width="2"/><circle cx="176.00" cy="790.75" r="2.9" fill="#ff9500"/><circle cx="236.26" cy="790.75" r="2.6" fill="#ff9500"/><circle cx="296.52" cy="743.25" r="2.6" fill="#ff9500"/><circle cx="356.78" cy="724.25" r="2.6" fill="#ff9500"/><circle cx="417.04" cy="719.50" r="2.6" fill="#ff9500"/><circle cx="477.30" cy="719.50" r="2.6" fill="#ff9500"/><circle cx="537.57" cy="714.75" r="2.6" fill="#ff9500"/><circle cx="597.83" cy="724.25" r="2.6" fill="#ff9500"/><circle cx="658.09" cy="714.75" r="2.6" fill="#ff9500"/><circle cx="718.35" cy="714.75" r="2.6" fill="#ff9500"/><circle cx="778.61" cy="714.75" r="2.6" fill="#ff9500"/><circle cx="838.87" cy="719.50" r="2.6" fill="#ff9500"/><circle cx="899.13" cy="714.75" r="2.6" fill="#ff9500"/><circle cx="959.39" cy="724.25" r="2.6" fill="#ff9500"/><circle cx="1019.65" cy="705.25" r="2.6" fill="#ff9500"/><circle cx="1079.91" cy="724.25" r="2.6" fill="#ff9500"/><circle cx="1140.17" cy="714.75" r="2.6" fill="#ff9500"/><circle cx="1200.43" cy="719.50" r="2.6" fill="#ff9500"/><circle cx="1260.70" cy="719.50" r="2.6" fill="#ff9500"/><circle cx="1320.96" cy="724.25" r="2.6" fill="#ff9500"/><circle cx="1381.22" cy="710.00" r="2.6" fill="#ff9500"/><circle cx="1441.48" cy="767.00" r="2.6" fill="#ff9500"/><circle cx="1501.74" cy="790.75" r="2.6" fill="#ff9500"/><circle cx="1562.00" cy="790.75" r="2.9" fill="#ff9500"/>
<line x1="176.5" y1="614.5" x2="176.5" y2="805.5" stroke="#a8a8a8" stroke-width="1"/>
<line x1="176.0" y1="805.5" x2="1563.0" y2="805.5" stroke="#a8a8a8" stroke-width="1"/>
<text x="166" y="807.8" text-anchor="end" class="ax">0</text>
<text x="166" y="769.8" text-anchor="end" class="ax">8</text>
<text x="166" y="731.8" text-anchor="end" class="ax">16</text>
<text x="166" y="693.8" text-anchor="end" class="ax">24</text>
<text x="166" y="655.8" text-anchor="end" class="ax">32</text>
<text x="166" y="617.8" text-anchor="end" class="ax">40</text>
<text x="176.5" y="824.0" text-anchor="middle" class="ax">May 16, 09:00 pm</text>
<text x="357.3" y="824.0" text-anchor="middle" class="ax">May 17, 12:00 am</text>
<text x="538.1" y="824.0" text-anchor="middle" class="ax">May 17, 03:00 am</text>
<text x="718.8" y="824.0" text-anchor="middle" class="ax">May 17, 06:00 am</text>
<text x="899.6" y="824.0" text-anchor="middle" class="ax">May 17, 09:00 am</text>
<text x="1080.4" y="824.0" text-anchor="middle" class="ax">May 17, 12:00 pm</text>
<text x="1261.2" y="824.0" text-anchor="middle" class="ax">May 17, 03:00 pm</text>
<text x="1442.0" y="824.0" text-anchor="middle" class="ax">May 17, 06:00 pm</text>
<text x="1562.5" y="824.0" text-anchor="middle" class="ax">May 17, 08:00 pm</text>
<text x="140" y="595.7" class="ttl">Usage (%)</text>
</svg>

<!-- scrollbar -->
<div class="abs" style="left:1779px;top:56px;width:4px;height:734px;background:#c0e0f6;border-radius:2px"></div>
<!-- chat -->
<svg class="abs" style="left:1726px;top:779px" width="40" height="36" viewBox="1726 779 40 36">
<rect x="1727.3" y="780.1" width="36" height="26.5" rx="3" fill="#0a8ee8"/>
<path d="M1744 806 H1756 V813.7 Z" fill="#0a8ee8"/>
<circle cx="1734.6" cy="793.5" r="2.4" fill="#fff"/><circle cx="1744.7" cy="793.5" r="2.4" fill="#fff"/><circle cx="1754.8" cy="793.5" r="2.4" fill="#fff"/></svg>
<svg class="abs" style="left:0;top:849px;z-index:9" width="8" height="8" viewBox="0 0 8 8"><path d="M0 0 A8 8 0 0 0 8 8 H0 Z" fill="#8a8a8a"/></svg>
<svg class="abs" style="left:1775px;top:849px;z-index:9" width="8" height="8" viewBox="0 0 8 8"><path d="M8 0 A8 8 0 0 1 0 8 H8 Z" fill="#8a8a8a"/></svg>
</body></html>
